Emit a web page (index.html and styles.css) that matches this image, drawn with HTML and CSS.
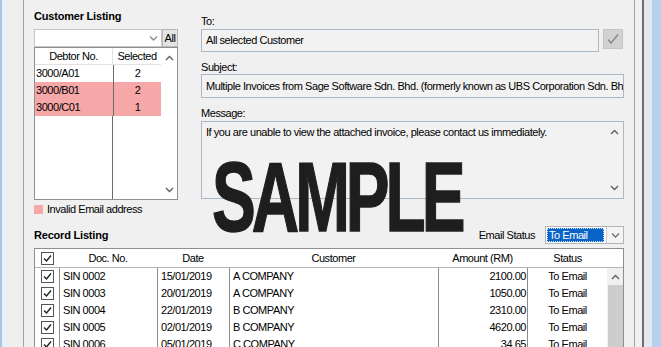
FILE: index.html
```html
<!DOCTYPE html>
<html>
<head>
    <title>Email Invoices</title>
    <link rel="stylesheet" href="styles.css">
</head>
<body>
    <div class="window">
        <div class="frame-left"></div>

        <div class="panel">
            <div class="top">
                <!-- customer listing -->
                <div class="cust">
                    <div class="title">Customer Listing</div>
                    <div class="combo-row">
                        <div class="combo">
                            <span class="drop">
                                <svg width="9" height="6" viewBox="0 0 9 6"><polyline points="1,1.5 4.5,5 8,1.5" fill="none" stroke="#8a8a8a" stroke-width="1.3"/></svg>
                            </span>
                        </div>
                        <div class="btn-all">All</div>
                    </div>
                    <div class="grid">
                        <div class="gcols">
                            <div class="grow ghead">
                                <div class="gc c1">Debtor No.</div>
                                <div class="gc c2">Selected</div>
                            </div>
                            <div class="grow">
                                <div class="gc c1 left">3000/A01</div>
                                <div class="gc c2">2</div>
                            </div>
                            <div class="grow bad">
                                <div class="gc c1 left">3000/B01</div>
                                <div class="gc c2">2</div>
                            </div>
                            <div class="grow bad">
                                <div class="gc c1 left">3000/C01</div>
                                <div class="gc c2">1</div>
                            </div>
                            <div class="grow fill">
                                <div class="gc c1"></div>
                                <div class="gc c2"></div>
                            </div>
                        </div>
                        <div class="gscroll">
                            <svg width="9" height="6" viewBox="0 0 9 6"><polyline points="1,5 4.5,1.5 8,5" fill="none" stroke="#606060" stroke-width="1.4"/></svg>
                            <svg width="9" height="6" viewBox="0 0 9 6"><polyline points="1,1 4.5,4.5 8,1" fill="none" stroke="#606060" stroke-width="1.4"/></svg>
                        </div>
                    </div>
                    <div class="legend"><span class="swatch"></span>Invalid Email address</div>
                </div>

                <!-- mail fields -->
                <div class="mail">
                    <div class="label first">To:</div>
                    <div class="to-row">
                        <div class="field">All selected Customer</div>
                        <div class="check-btn">
                            <svg width="14" height="12" viewBox="0 0 14 12"><polyline points="2,6.5 5,10 12,1.5" fill="none" stroke="#8c8c8c" stroke-width="1.6"/></svg>
                        </div>
                    </div>
                    <div class="label">Subject:</div>
                    <div class="field subject">Multiple Invoices from Sage Software Sdn. Bhd. (formerly known as UBS Corporation Sdn. Bhd.)</div>
                    <div class="label">Message:</div>
                    <div class="memo">
                        <div class="memo-text">If you are unable to view the attached invoice, please contact us immediately.</div>
                        <div class="mscroll">
                            <svg width="9" height="6" viewBox="0 0 9 6"><polyline points="1,5 4.5,1.5 8,5" fill="none" stroke="#606060" stroke-width="1.4"/></svg>
                            <svg width="9" height="6" viewBox="0 0 9 6"><polyline points="1,1 4.5,4.5 8,1" fill="none" stroke="#606060" stroke-width="1.4"/></svg>
                        </div>
                    </div>
                </div>
            </div>

            <!-- record listing -->
            <div class="rec-head">
                <div class="title">Record Listing</div>
                <div class="status-filter">
                    <span>Email Status</span>
                    <div class="combo2">
                        <span class="sel">To Email</span>
                        <span class="drop2">
                            <svg width="9" height="6" viewBox="0 0 9 6"><polyline points="1,1.5 4.5,5 8,1.5" fill="none" stroke="#707070" stroke-width="1.3"/></svg>
                        </span>
                    </div>
                </div>
            </div>

            <div class="table">
                <div class="trow thead">
                    <div class="tc"><span class="cb"></span></div>
                    <div class="tc">Doc. No.</div>
                    <div class="tc">Date</div>
                    <div class="tc">Customer</div>
                    <div class="tc">Amount (RM)</div>
                    <div class="tc">Status</div>
                    <div class="tc"></div>
                </div>
                <div class="tbody">
                    <div class="trow">
                        <div class="tc"><span class="cb"></span></div>
                        <div class="tc txt">SIN 0002</div>
                        <div class="tc txt">15/01/2019</div>
                        <div class="tc txt">A COMPANY</div>
                        <div class="tc num">2100.00</div>
                        <div class="tc">To Email</div>
                    </div>
                    <div class="trow">
                        <div class="tc"><span class="cb"></span></div>
                        <div class="tc txt">SIN 0003</div>
                        <div class="tc txt">20/01/2019</div>
                        <div class="tc txt">A COMPANY</div>
                        <div class="tc num">1050.00</div>
                        <div class="tc">To Email</div>
                    </div>
                    <div class="trow">
                        <div class="tc"><span class="cb"></span></div>
                        <div class="tc txt">SIN 0004</div>
                        <div class="tc txt">22/01/2019</div>
                        <div class="tc txt">B COMPANY</div>
                        <div class="tc num">2310.00</div>
                        <div class="tc">To Email</div>
                    </div>
                    <div class="trow">
                        <div class="tc"><span class="cb"></span></div>
                        <div class="tc txt">SIN 0005</div>
                        <div class="tc txt">02/01/2019</div>
                        <div class="tc txt">B COMPANY</div>
                        <div class="tc num">4620.00</div>
                        <div class="tc">To Email</div>
                    </div>
                    <div class="trow">
                        <div class="tc"><span class="cb"></span></div>
                        <div class="tc txt">SIN 0006</div>
                        <div class="tc txt">05/01/2019</div>
                        <div class="tc txt">C COMPANY</div>
                        <div class="tc num">34.65</div>
                        <div class="tc">To Email</div>
                    </div>
                    <div class="tscroll">
                        <div class="tup">
                            <svg width="9" height="6" viewBox="0 0 9 6"><polyline points="1,5 4.5,1.5 8,5" fill="none" stroke="#606060" stroke-width="1.4"/></svg>
                        </div>
                        <div class="thumb"></div>
                    </div>
                </div>
            </div>
        </div>

        <div class="frame-right"></div>
    </div>

    <!-- watermark over the form -->
    <div class="sample">SAMPLE</div>
</body>
</html>
```

FILE: styles.css
```css
body {
    margin: 0;
    width: 661px;
    height: 347px;
    overflow: hidden;
    position: relative;
    background: #f0f0f0;
    font-family: "Liberation Sans", Arial, sans-serif;
    font-size: 11px;
    letter-spacing: -0.45px;
    color: #000;
}
.window { display: flex; height: 347px; }
.frame-left {
    flex: none;
    width: 25px;
    background: linear-gradient(to right, #a9c5e3 0 2px, #e9eff6 2px 7px, #eeeeee 7px 23px, #a3a3a3 23px 24px, #f0f0f0 24px);
}
.frame-right {
    flex: none;
    width: 27px;
    background: linear-gradient(to right, #a3a3a3 0 1px, #f0f0f0 1px 8px, #6e6e6e 8px 10px, #e2e9f1 10px 18px, #b6d1ed 18px);
}
.panel { flex: 1; padding: 10px 10px 0 9px; min-width: 0; }

.title { font-weight: bold; line-height: 13px; height: 13px; letter-spacing: -0.2px; }

.top { display: flex; gap: 23px; height: 216px; }
.cust { width: 144px; flex: none; }
.mail { flex: 1; min-width: 0; padding-top: 5px; }

/* combo + All button */
.combo-row { display: flex; height: 18px; margin-top: 6px; }
.combo {
    width: 128px;
    box-sizing: border-box;
    background: #fff;
    border: 1px solid #c5c5c5;
    display: flex;
    justify-content: flex-end;
}
.drop { width: 16px; display: flex; align-items: center; justify-content: center; }
.btn-all {
    width: 16px;
    box-sizing: border-box;
    border: 1px solid #b8b8b8;
    background: #e3e3e3;
    line-height: 16px;
    text-align: center;
}

/* customer grid */
.grid {
    display: flex;
    height: 153px;
    box-sizing: border-box;
    border: 1px solid #8f8f8f;
    background: #fff;
}
.gcols { flex: 1; display: flex; flex-direction: column; }
.grow { display: flex; height: 17px; line-height: 17px; }
.grow.fill { flex: 1; }
.ghead { border-bottom: 1px solid #e2e2e2; height: 16px; line-height: 16px; }
.gc { text-align: center; }
.gc.left { text-align: left; padding-left: 1px; }
.c1 { width: 77px; }
.c2 { flex: 1; border-left: 1px solid #6a6a6a; }
.ghead .c2 { border-left-color: #e2e2e2; }
.bad { background: #f6a7a7; }
.gscroll {
    width: 16px;
    display: flex;
    flex-direction: column;
    justify-content: space-between;
    align-items: center;
    padding: 7px 0 6px;
}

.legend { display: flex; align-items: center; gap: 4px; margin-top: 3px; line-height: 13px; }
.swatch { width: 9px; height: 9px; background: #f6a7a7; }

/* mail fields */
.label { line-height: 13px; margin-top: 9px; }
.label.first { margin-top: 0; }
.to-row { display: flex; gap: 4px; margin-top: 1px; }
.field {
    flex: 1;
    min-width: 0;
    box-sizing: border-box;
    height: 23px;
    line-height: 21px;
    padding-left: 4px;
    border: 1px solid #abb8c7;
    background: #f2f2f2;
    white-space: nowrap;
    overflow: hidden;
}
.field.subject { height: 24px; line-height: 22px; }
.check-btn {
    flex: none;
    width: 20px;
    height: 20px;
    margin-right: 1px;
    background: #d2d2d2;
    border: 1px solid #c6c6c6;
    box-sizing: border-box;
    display: flex;
    align-items: center;
    justify-content: center;
}
.memo {
    display: flex;
    height: 78px;
    box-sizing: border-box;
    margin-top: 1px;
    border: 1px solid #abb8c7;
    background: #f2f2f2;
}
.memo-text { flex: 1; padding: 3px 4px; line-height: 14px; }
.mscroll {
    width: 17px;
    display: flex;
    flex-direction: column;
    justify-content: space-between;
    align-items: center;
    padding: 7px 0 7px;
}

/* record listing */
.rec-head {
    display: flex;
    justify-content: space-between;
    align-items: center;
    height: 18px;
}
.status-filter { display: flex; align-items: center; gap: 10px; }
.combo2 {
    display: flex;
    width: 79px;
    height: 18px;
    box-sizing: border-box;
    border: 1px solid #b5b5b5;
    background: #fff;
    padding: 1px 0 1px 1px;
}
.sel {
    width: 57px;
    background: #0a64c8;
    color: #fff;
    line-height: 14px;
    padding-left: 2px;
    box-sizing: border-box;
    outline: 1px dotted #c9dcf2;
    outline-offset: -1px;
}
.drop2 {
    flex: 1;
    margin: -1px 0 -1px 2px;
    border-left: 1px solid #d0d0d0;
    background: #f3f3f3;
    display: flex;
    align-items: center;
    justify-content: center;
}

.table {
    margin-top: 4px;
    border: 1px solid #8f8f8f;
    background: #fff;
    height: 120px;
    overflow: hidden;
}
.trow {
    display: grid;
    grid-template-columns: 24px 98px 72px 209px 89px 81px 16px;
    height: 17px;
    line-height: 17px;
}
.thead { height: 18px; line-height: 18px; border-bottom: 1px solid #b4b4b4; }
.tc { text-align: center; white-space: nowrap; overflow: hidden; }
.tc.txt { text-align: left; padding-left: 3px; }
.tc.num { text-align: right; padding-right: 1px; }
.tbody .tc + .tc { border-left: 1px solid #8c8c8c; }
.tbody .tc:last-child { border-right: 1px solid #8c8c8c; }
.tbody { position: relative; }
.tbody .trow { grid-template-columns: 24px 98px 72px 209px 89px 81px; }
.tc .cb {
    display: inline-block;
    width: 13px;
    height: 13px;
    vertical-align: middle;
    margin-top: -2px;
    box-sizing: border-box;
    border: 1px solid #555;
    background: #fff url("data:image/svg+xml,%3Csvg xmlns='http://www.w3.org/2000/svg' width='11' height='11'%3E%3Cpolyline points='2,5.5 4.5,8 9,2.5' fill='none' stroke='%23222' stroke-width='1.4'/%3E%3C/svg%3E") center no-repeat;
}

/* record scrollbar overlays the right edge of the body rows */
.tscroll {
    position: absolute;
    top: 0;
    right: 0;
    width: 16px;
    height: 200px;
    background: #f0f0f0;
    display: flex;
    flex-direction: column;
    align-items: center;
}
.tup { height: 17px; display: flex; align-items: center; }
.thumb { width: 15px; flex: 1; background: #cdcdcd; }

.sample {
    position: absolute;
    left: 212px;
    top: 157px;
    font-family: "Liberation Sans", Arial, sans-serif;
    font-weight: bold;
    font-size: 98px;
    line-height: 80px;
    letter-spacing: -6px;
    color: #1e1e1e;
    -webkit-text-stroke: 1.5px #1e1e1e;
    transform: scaleX(0.67);
    transform-origin: left top;
}
```
